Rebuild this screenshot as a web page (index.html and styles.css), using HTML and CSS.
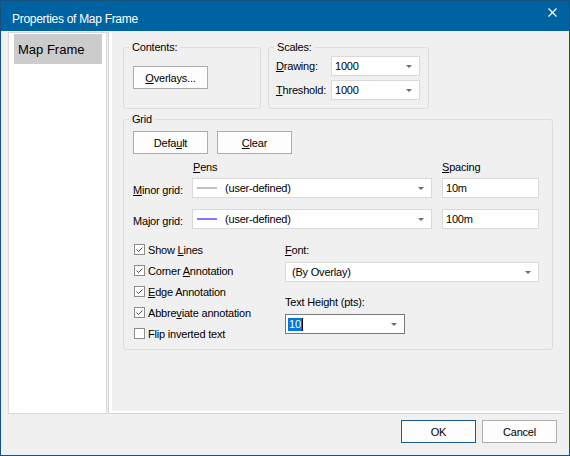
FILE: index.html
```html
<!DOCTYPE html>
<html lang="en">
<head>
    <meta charset="UTF-8">
    <title>Properties of Map Frame</title>
    <link rel="stylesheet" href="styles.css">
</head>
<body>
    <div class="window">
        <div class="titlebar">
            <span class="title">Properties of Map Frame</span>
            <svg class="close" width="9" height="9" viewBox="0 0 9 9">
                <path d="M0.5 0.5 L8.5 8.5 M8.5 0.5 L0.5 8.5" stroke="#fff" stroke-width="1.2" fill="none"/>
            </svg>
        </div>

        <div class="body">
            <div class="main">
                <ul class="nav-list">
                    <li class="nav-item selected">Map Frame</li>
                </ul>

                <div class="panel">
                    <div class="top-row">
                        <div class="group contents">
                            <span class="group-title">Contents:</span>
                            <button class="btn"><u>O</u>verlays...</button>
                        </div>
                        <div class="group scales">
                            <span class="group-title">Scales:</span>
                            <span class="label"><u>D</u>rawing:</span>
                            <div class="combo">1000</div>
                            <span class="label"><u>T</u>hreshold:</span>
                            <div class="combo">1000</div>
                        </div>
                    </div>

                    <div class="group grid-group">
                        <span class="group-title">Grid</span>
                        <div class="btn-row">
                            <button class="btn">Defa<u>u</u>lt</button>
                            <button class="btn"><u>C</u>lear</button>
                        </div>

                        <div class="pens-head">
                            <span class="pens-label"><u>P</u>ens</span>
                            <span><u>S</u>pacing</span>
                        </div>
                        <div class="pen-row">
                            <span class="pen-name"><u>M</u>inor grid:</span>
                            <div class="combo pen-combo"><span class="pen-line minor"></span><span>(user-defined)</span></div>
                            <div class="field">10m</div>
                        </div>
                        <div class="pen-row second">
                            <span class="pen-name">Major grid:</span>
                            <div class="combo pen-combo"><span class="pen-line major"></span><span>(user-defined)</span></div>
                            <div class="field">100m</div>
                        </div>

                        <div class="options">
                            <div class="checks">
                                <div class="check-row"><span class="box"><svg width="9" height="9" viewBox="0 0 9 9"><path d="M1.5 4.5 L3.5 6.5 L7.5 2.5" stroke="#444" stroke-width="1" fill="none"/></svg></span><span>Show <u>L</u>ines</span></div>
                                <div class="check-row"><span class="box"><svg width="9" height="9" viewBox="0 0 9 9"><path d="M1.5 4.5 L3.5 6.5 L7.5 2.5" stroke="#444" stroke-width="1" fill="none"/></svg></span><span>Corner <u>A</u>nnotation</span></div>
                                <div class="check-row"><span class="box"><svg width="9" height="9" viewBox="0 0 9 9"><path d="M1.5 4.5 L3.5 6.5 L7.5 2.5" stroke="#444" stroke-width="1" fill="none"/></svg></span><span><u>E</u>dge Annotation</span></div>
                                <div class="check-row"><span class="box"><svg width="9" height="9" viewBox="0 0 9 9"><path d="M1.5 4.5 L3.5 6.5 L7.5 2.5" stroke="#444" stroke-width="1" fill="none"/></svg></span><span>Abbre<u>v</u>iate annotation</span></div>
                                <div class="check-row"><span class="box"></span><span>Flip inverted text</span></div>
                            </div>
                            <div class="font-col">
                                <div class="field-label"><u>F</u>ont:</div>
                                <div class="combo wide">(By Overlay)</div>
                                <div class="field-label gap">Text Hei<u>g</u>ht (pts):</div>
                                <div class="combo height-combo"><span class="sel">10</span></div>
                            </div>
                        </div>
                    </div>
                </div>
            </div>

            <div class="footer">
                <button class="btn btn-primary">OK</button>
                <button class="btn">Cancel</button>
            </div>
        </div>
    </div>
</body>
</html>
```

FILE: styles.css
```css
/* Reset and base font */
* {
    margin: 0;
    padding: 0;
    box-sizing: border-box;
}

body {
    font-family: 'Liberation Sans', Arial, sans-serif;
    font-size: 11px;
    letter-spacing: -0.2px;
    color: #000;
    background: #fff;
}

.window {
    width: 570px;
    height: 456px;
    border: 1px solid #17507f;
    background-color: #f0f0f0;
    display: flex;
    flex-direction: column;
}

.titlebar {
    height: 30px;
    background-color: #0063a1;
    color: #fff;
    display: flex;
    justify-content: space-between;
    align-items: flex-start;
    padding: 0 12px 0 11px;
}

.title {
    margin-top: 11px;
    font-size: 12px;
    line-height: 14px;
    letter-spacing: -0.3px;
}

.close {
    margin-top: 7px;
}

.body {
    flex: 1;
    padding: 1px 6px 0 7px;
    display: flex;
    flex-direction: column;
}

.main {
    display: flex;
    gap: 1px;
    height: 382px;
}

/* Left page list */
.nav-list {
    list-style: none;
    width: 99px;
    background-color: #fff;
    border: 1px solid #d9d9d9;
    padding: 1px 4px 0 5px;
}

.nav-item {
    height: 30px;
    padding-left: 4px;
    display: flex;
    align-items: center;
    font-size: 13px;
    letter-spacing: 0;
}

.nav-item.selected {
    background-color: #cccccc;
}

/* Property page */
.panel {
    flex: 1;
    border-left: 1px solid #d4d4d4;
    border-bottom: 1px solid #d4d4d4;
    box-shadow: inset 3px -2px 0 #fff;
    padding: 15px 0 0 14px;
}

.top-row {
    display: flex;
    gap: 7px;
}

.group {
    position: relative;
    border: 1px solid #dcdcdc;
    border-radius: 3px;
}

.group-title {
    position: absolute;
    top: -8px;
    left: 5px;
    padding: 0 3px;
    line-height: 14px;
    background-color: #f0f0f0;
}

.contents {
    width: 138px;
    height: 62px;
    padding: 18px 0 0 9px;
}

.scales {
    width: 161px;
    height: 62px;
    padding: 8px 7px 0 7px;
    display: grid;
    grid-template-columns: 55px 89px;
    grid-auto-rows: 20px;
    row-gap: 4px;
    align-items: center;
}

.btn {
    width: 75px;
    height: 23px;
    border: 1px solid #adadad;
    background-color: #fdfdfd;
    font-family: inherit;
    font-size: 11px;
    letter-spacing: -0.2px;
    color: #000;
}

.btn-primary {
    border-color: #1a5a8c;
}

.combo {
    position: relative;
    height: 20px;
    background-color: #fff;
    border: 1px solid #d9d9d9;
    padding-left: 3px;
    display: flex;
    align-items: center;
    white-space: nowrap;
}

.combo::after {
    content: "";
    position: absolute;
    right: 7px;
    top: 8px;
    width: 0;
    height: 0;
    border-left: 3px solid transparent;
    border-right: 3px solid transparent;
    border-top: 3px solid #6c6c6c;
}

.field {
    height: 20px;
    background-color: #fff;
    border: 1px solid #d9d9d9;
    padding-left: 3px;
    display: flex;
    align-items: center;
}

/* Grid group */
.grid-group {
    margin-top: 10px;
    width: 430px;
    padding: 11px 0 5px 9px;
}

.btn-row {
    display: flex;
    gap: 9px;
}

.pens-head {
    display: flex;
    line-height: 14px;
    margin: 6px 0 4px;
}

.pens-label {
    margin-left: 60px;
    width: 249px;
}

.pen-row {
    display: flex;
    align-items: center;
}

.pen-row.second {
    margin-top: 11px;
}

.pen-name {
    width: 59px;
    padding-top: 3px;
    white-space: nowrap;
}

.pen-combo {
    width: 240px;
    margin-right: 10px;
    padding-left: 4px;
}

.pen-row .field {
    width: 97px;
}

.pen-line {
    width: 20px;
    height: 2px;
    margin-right: 8px;
}

.pen-line.minor {
    background-color: #c0c0c0;
}

.pen-line.major {
    background-color: #7b7bff;
}

.options {
    display: flex;
    margin-top: 10px;
}

.checks {
    width: 152px;
}

.check-row {
    height: 21px;
    display: flex;
    align-items: center;
    gap: 3px;
    padding-left: 1px;
    white-space: nowrap;
}

.box {
    width: 11px;
    height: 11px;
    border: 1px solid #8c8c8c;
    background-color: #fff;
    display: flex;
}

.font-col {
    width: 254px;
    padding-top: 4px;
}

.field-label {
    line-height: 14px;
    margin-bottom: 5px;
}

.field-label.gap {
    margin-top: 13px;
}

.combo.wide {
    padding-left: 6px;
}

.height-combo {
    width: 120px;
    border-color: #7a7a7a;
    padding-left: 2px;
}

.sel {
    background-color: #0078d7;
    color: #fff;
    line-height: 13px;
    padding: 0 1px;
    border-right: 1px solid #000;
}

/* Dialog buttons */
.footer {
    display: flex;
    justify-content: flex-end;
    gap: 6px;
    margin-top: 6px;
    padding-right: 6px;
}
```
